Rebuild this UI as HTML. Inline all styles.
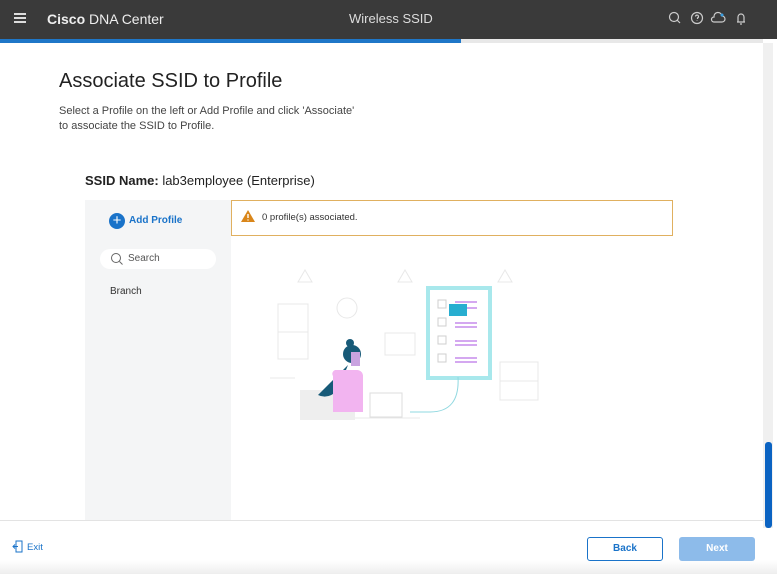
<!DOCTYPE html>
<html><head><style>
body{margin:0;width:777px;height:574px;overflow:hidden;background:#fff;font-family:"Liberation Sans",sans-serif;position:relative}
.a{position:absolute}
</style></head><body>
<div class="a" style="left:0;top:0;width:777px;height:39px;background:#3a3a3a"></div>
<div class="a" style="left:14px;top:13px;width:12px;height:2px;background:#ddd;box-shadow:0 4px 0 #ddd,0 8px 0 #ddd"></div>
<div class="a" style="left:47px;top:11px;color:#eee;font-size:14px"><b>Cisco</b> DNA Center</div>
<div class="a" style="left:349px;top:11px;color:#ddd;font-size:13px">Wireless SSID</div>
<svg class="a" style="left:664px;top:10px" width="90" height="16" fill="none" stroke="#ccc" stroke-width="1.2">
<circle cx="10" cy="7" r="4.5"/><path d="M13 10l3 3"/>
<circle cx="33" cy="8" r="5.5"/><path d="M31.5 6.5a1.5 1.5 0 1 1 2 1.5v1M33 10.5v.5"/>
<path d="M50 12h8a3 3 0 0 0 0-6a4 4 0 0 0-8 1a2.5 2.5 0 0 0 0 5z"/><circle cx="58" cy="5" r="1.5" fill="#3a9ee0" stroke="none"/>
<path d="M73 12h8M74 12v-5a3 3 0 0 1 6 0v5M76 14h2"/>
</svg>
<div class="a" style="left:0;top:39px;width:763px;height:4px;background:#e8e8e8"></div>
<div class="a" style="left:0;top:39px;width:461px;height:4px;background:#1f77c8"></div>
<div class="a" style="left:763px;top:43px;width:10px;height:485px;background:#f0f0f0"></div>
<div class="a" style="left:765px;top:442px;width:7px;height:86px;background:#0b63c2;border-radius:3px"></div>
<div class="a" style="left:59px;top:70px;font-size:20px;color:#222">Associate SSID to Profile</div>
<div class="a" style="left:59px;top:104px;font-size:11px;color:#444;line-height:15px">Select a Profile on the left or Add Profile and click 'Associate'<br>to associate the SSID to Profile.</div>
<div class="a" style="left:85px;top:173px;font-size:13px;color:#222"><b>SSID Name:</b> lab3employee (Enterprise)</div>
<div class="a" style="left:85px;top:200px;width:146px;height:320px;background:#f4f5f6"></div>
<div class="a" style="left:109px;top:213px;width:16px;height:16px;border-radius:50%;background:#1a73c9;color:#fff;font-size:15px;line-height:16px;text-align:center">+</div>
<div class="a" style="left:129px;top:215px;font-size:10px;color:#1a73c9;font-weight:bold">Add Profile</div>
<div class="a" style="left:100px;top:249px;width:116px;height:20px;border-radius:10px;background:#fff"></div>
<svg class="a" style="left:110px;top:252px" width="14" height="14" fill="none" stroke="#666"><circle cx="6" cy="6" r="4.5"/><path d="M9.5 9.5l3 3"/></svg>
<div class="a" style="left:128px;top:253px;font-size:10px;color:#555">Search</div>
<div class="a" style="left:110px;top:286px;font-size:10px;color:#333">Branch</div>
<div class="a" style="left:231px;top:200px;width:440px;height:34px;border:1px solid #e0b060;background:#fff"></div>
<svg class="a" style="left:240px;top:209px" width="16" height="14"><path d="M8 1L15 13H1z" fill="#d9861a"/><path d="M8 5v4M8 10.5v1" stroke="#fff" stroke-width="1.4"/></svg>
<div class="a" style="left:262px;top:212px;font-size:9.5px;color:#333">0 profile(s) associated.</div>
<svg class="a" style="left:260px;top:250px" width="300" height="180" fill="none">
<g stroke="#e8e8e8"><path d="M45 20l-7 12h14z M145 20l-7 12h14z M245 20l-7 12h14z"/>
<rect x="18" y="54" width="30" height="55"/><path d="M18 82h30"/><circle cx="87" cy="58" r="10"/>
<rect x="125" y="83" width="30" height="22"/><rect x="240" y="112" width="38" height="38"/><path d="M240 131h38"/>
<path d="M10 128h25M40 168h120"/></g>
<rect x="168" y="38" width="62" height="90" fill="#fff" stroke="#a8e8ec" stroke-width="4"/>
<g stroke="#cfcfcf"><rect x="178" y="50" width="8" height="8"/><rect x="178" y="68" width="8" height="8"/><rect x="178" y="86" width="8" height="8"/><rect x="178" y="104" width="8" height="8"/></g>
<g stroke="#d4a8f0" stroke-width="2"><path d="M195 52h22M195 58h22M195 73h22M195 77h22M195 91h22M195 95h22M195 108h22M195 112h22"/></g>
<rect x="189" y="54" width="18" height="12" fill="#28aed0"/>
<path d="M150 162h20q30 0 28-35" stroke="#8fd8e0"/>
<rect x="40" y="140" width="55" height="30" fill="#eee"/>
<rect x="110" y="143" width="32" height="24" fill="#fff" stroke="#ddd"/>
<path d="M88 115q-20 20-30 30q10 5 20-5z" fill="#175a78"/>
<circle cx="92" cy="104" r="9" fill="#175a78"/><circle cx="90" cy="93" r="4" fill="#175a78"/>
<rect x="91" y="102" width="9" height="14" fill="#c9a3e0"/>
<path d="M75 120h22a6 6 0 0 1 6 6v36h-30v-36a4 4 0 0 1 2-6z" fill="#f2b4f0"/>
</svg>
<div class="a" style="left:0;top:520px;width:763px;height:1px;background:#e3e3e3"></div>
<div class="a" style="left:0;top:560px;width:777px;height:14px;background:linear-gradient(#fff,#eee)"></div>
<svg class="a" style="left:12px;top:540px" width="12" height="13" fill="none" stroke="#1a73c9"><rect x="4" y="1" width="6" height="11"/><path d="M1 6.5h5M3 4.5l-2 2 2 2"/></svg>
<div class="a" style="left:27px;top:542px;font-size:9.5px;color:#1a73c9">Exit</div>
<div class="a" style="left:587px;top:537px;width:74px;height:22px;border:1px solid #1a73c9;border-radius:3px;color:#1a73c9;font-size:10px;text-align:center;line-height:22px;font-weight:bold">Back</div>
<div class="a" style="left:679px;top:537px;width:76px;height:24px;border-radius:3px;background:#8dbbea;color:#fff;font-size:10px;text-align:center;line-height:24px;font-weight:bold">Next</div>
</body></html>
